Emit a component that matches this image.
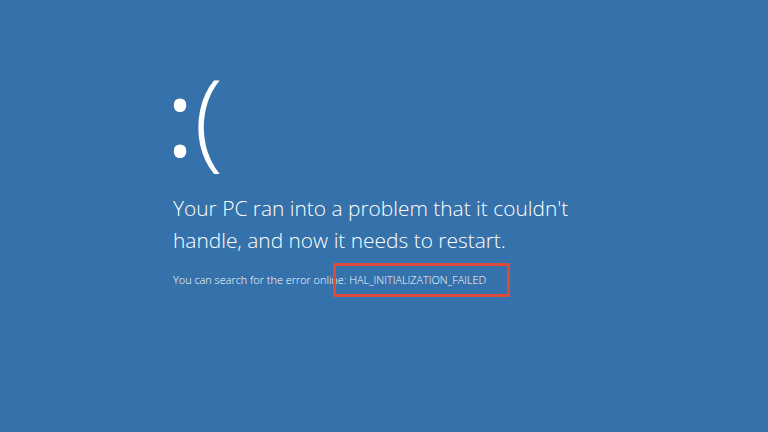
import React from 'react';

const App = () => {
  return (
    <main className="w-[768px] h-[432px] bg-[#3571aa] overflow-hidden text-white" style={{ fontFamily: '"Open Sans", "Noto Sans", sans-serif' }}>
      <div className="pl-[166px] pt-[51px]">
        <div className="text-[107px] leading-[130px] font-light tracking-[0px]">
          <span className="font-normal">:</span>(
        </div>
        <div className="mt-[11px] pl-[7px] text-[20.9px] leading-[32px] font-light">
          <p>Your PC ran into a problem that it couldn't</p>
          <p>handle, and now it needs to restart.</p>
        </div>
        <div className="relative mt-[16px] pl-[7px] text-[10.9px] leading-[16px] font-light">
          You can search for the error online: HAL_INITIALIZATION_FAILED
          <div className="absolute left-[167px] top-[-9px] w-[177px] h-[34px] border-[3px] border-[#dc4a3c]" />
        </div>
      </div>
    </main>
  );
};

export default App;
